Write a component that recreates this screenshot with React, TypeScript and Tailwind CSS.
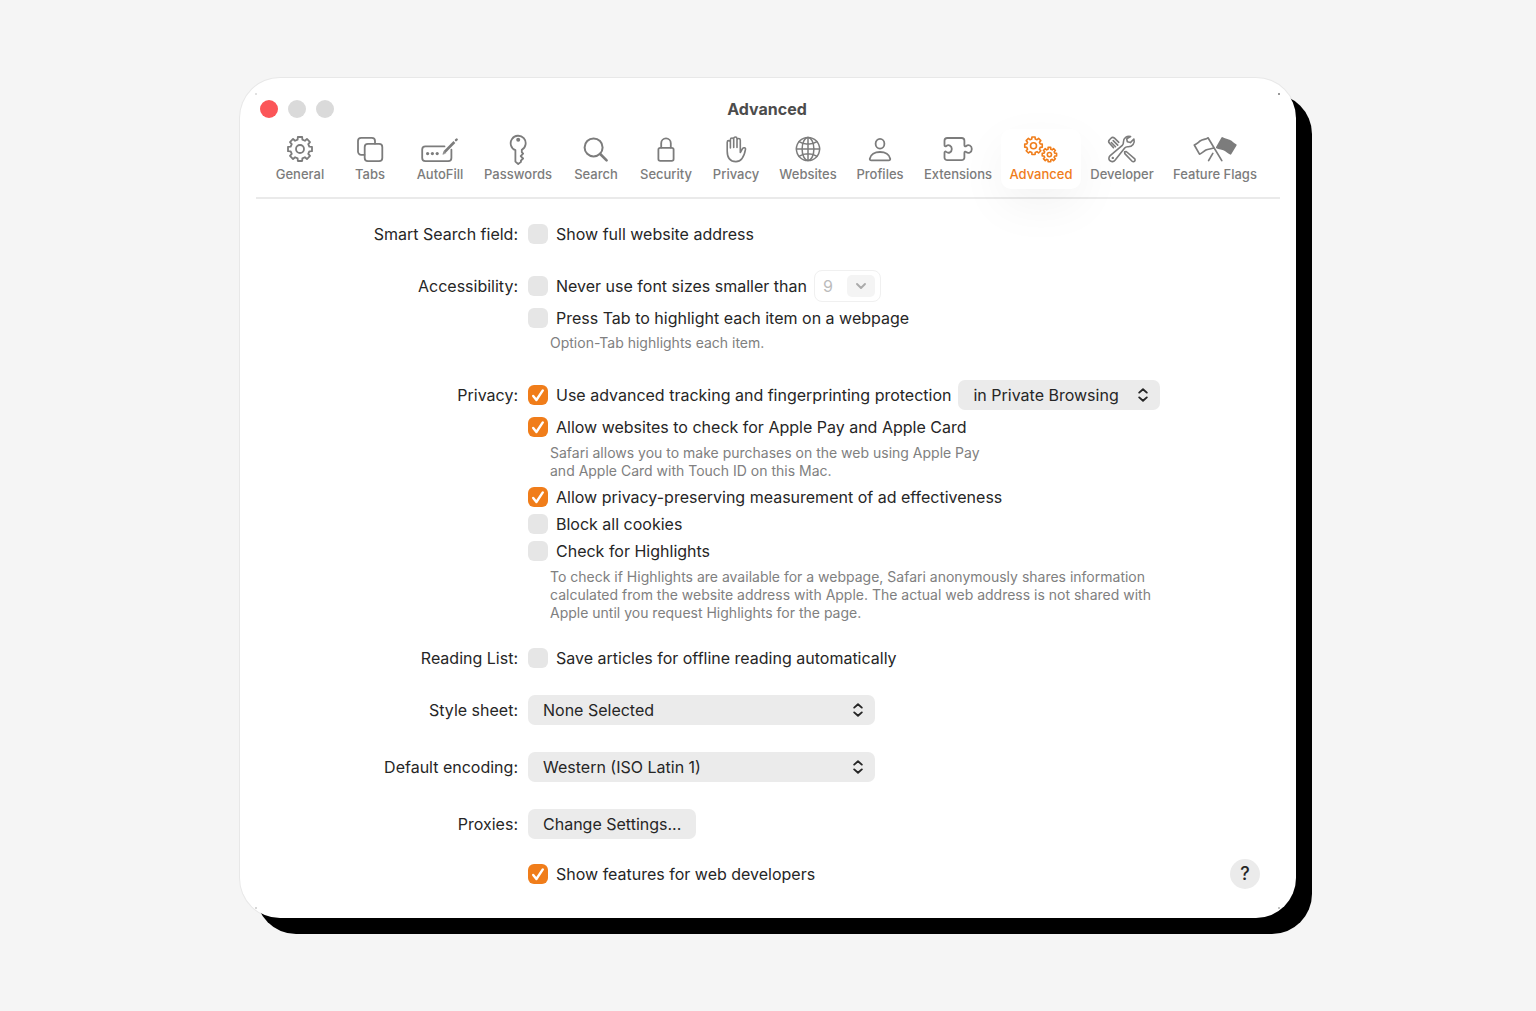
import type { ReactNode } from "react";

function gearPath(cx: number, cy: number, outer: number, inner: number) {
  const teeth = 8;
  const at = (angle: number, r: number) =>
    `${(cx + r * Math.cos(angle)).toFixed(2)} ${(cy + r * Math.sin(angle)).toFixed(2)}`;
  const points: string[] = [];
  for (let i = 0; i < teeth; i++) {
    const a = (i * 2 * Math.PI) / teeth - Math.PI / 2;
    points.push(at(a - 0.25, inner), at(a - 0.18, outer), at(a + 0.18, outer), at(a + 0.25, inner));
  }
  return `M${points.join("L")}Z`;
}

function Icon({ width = 32, stroke = 1.8, children }: { width?: number; stroke?: number; children: ReactNode }) {
  return (
    <svg
      width={width}
      height={32}
      viewBox={`0 0 ${width} 32`}
      fill="none"
      stroke="currentColor"
      strokeWidth={stroke}
      strokeLinecap="round"
      strokeLinejoin="round"
      aria-hidden="true"
    >
      {children}
    </svg>
  );
}

const icons: Record<string, ReactNode> = {
  General: (
    <Icon>
      <path d={gearPath(16, 16, 12.2, 9.6)} />
      <circle cx="16" cy="16" r="4" />
    </Icon>
  ),
  Tabs: (
    <Icon>
      <path d="M10.5 21.8H7.2a3.2 3.2 0 0 1-3.2-3.2V8a3.2 3.2 0 0 1 3.2-3.2h10.6A3.2 3.2 0 0 1 21 8v2.6" />
      <rect x="10.7" y="10.8" width="17.6" height="17.4" rx="3.2" />
    </Icon>
  ),
  AutoFill: (
    <Icon width={40}>
      <path d="M24.5 13.4H5.4a3.2 3.2 0 0 0-3.2 3.2V25a3.2 3.2 0 0 0 3.2 3.2h22.8a3.2 3.2 0 0 0 3.2-3.2v-8.3" />
      <path d="M24.6 19 34.4 9" strokeWidth="2.6" strokeLinecap="butt" />
      <path d="m23 21 .9-2.6 1.5 1.5Z" fill="currentColor" strokeWidth=".6" />
      <path d="m36 7.2.7-.7" strokeWidth="2.4" />
      <g fill="currentColor" stroke="none">
        <circle cx="7.6" cy="20.6" r="1.6" />
        <circle cx="12.4" cy="20.6" r="1.6" />
        <circle cx="17.2" cy="20.6" r="1.6" />
      </g>
    </Icon>
  ),
  Passwords: (
    <Icon>
      <path d="M13.4 17.2a7.5 7.5 0 1 1 6.4-.4v2.4l1.3 1.5-2.4 2.4 2.4 2.4-2.2 2.2.1 1.2L16.2 31l-2.8-2.4Z" />
      <circle cx="16.2" cy="6.8" r="2" fill="currentColor" stroke="none" />
    </Icon>
  ),
  Search: (
    <Icon stroke={2}>
      <circle cx="13.6" cy="14.4" r="9" />
      <path d="m20.2 21 6.4 6.4" strokeWidth="2.6" />
    </Icon>
  ),
  Security: (
    <Icon>
      <rect x="8.4" y="14.8" width="15.2" height="13" rx="1.8" />
      <path d="M11.2 14.6V10.2a4.8 4.8 0 0 1 9.6 0v4.4" />
    </Icon>
  ),
  Privacy: (
    <Icon stroke={1.6}>
      <path d="M7.2 18V9.2a1.6 1.6 0 0 1 3.2 0V15 6.7a1.6 1.6 0 0 1 3.3 0v7.8-8.8a1.6 1.6 0 0 1 3.3 0v8.8-7.3a1.6 1.6 0 0 1 3.3 0v12.3l2.2-3.8c.9-1.5 3.3-1.3 3 .6-.9 4.9-2.6 12.3-9.6 12.3-6.2 0-8.7-4-8.7-10.6Z" />
    </Icon>
  ),
  Websites: (
    <Icon stroke={1.5}>
      <circle cx="16" cy="16" r="11.6" />
      <ellipse cx="16" cy="16" rx="5.9" ry="11.6" />
      <path d="M16 4.4v23.2M4.4 16h23.2M7 8.6c5 3.4 13 3.4 18 0M7 23.4c5-3.4 13-3.4 18 0" />
    </Icon>
  ),
  Profiles: (
    <Icon>
      <ellipse cx="16" cy="10.7" rx="4.4" ry="4.9" />
      <path d="M7.3 27.4c-1.1 0-1.7-.7-1.5-1.7.8-4 4.8-6.7 10.2-6.7s9.4 2.7 10.2 6.7c.2 1-.4 1.7-1.5 1.7Z" />
    </Icon>
  ),
  Extensions: (
    <Icon>
      <path d="M2.5 12.2V7.8a2.8 2.8 0 0 1 2.8-2.8h14.3a2.8 2.8 0 0 1 2.8 2.8v4.5c0 1 1.1 1.4 1.8.7 2.3-2 5.6-.4 5.6 3s-3.3 5-5.6 3c-.7-.7-1.8-.3-1.8.7v4.7a2.8 2.8 0 0 1-2.8 2.8H5.3a2.8 2.8 0 0 1-2.8-2.8v-4.9c0-1 1-1.3 1.8-.6 2.3 1.9 5.5.3 5.5-2.9s-3.2-4.9-5.5-3c-.8.7-1.8.3-1.8-.8Z" />
    </Icon>
  ),
  Advanced: (
    <Icon width={36} stroke={1.6}>
      <path d={gearPath(10.5, 12.7, 8.9, 6.9)} />
      <circle cx="10.5" cy="12.7" r="3" />
      <path d={gearPath(26.4, 21.6, 7.3, 5.5)} />
      <circle cx="26.4" cy="21.6" r="2.1" />
    </Icon>
  ),
  Developer: (
    <Icon stroke={1.6}>
      <path d="m7.5 14.6-4-4.4c-1-1.1-1-2.5 0-3.5l1.5-1.5c1-1 2.4-1 3.5 0l4.3 4.1M7.2 7.6l4.5 4.5M5.3 9.5l4.2 4.2" />
      <path d="m18.6 18.8 1.6-.3 8.3 7.2c1.7 1.5-.7 4.2-2.4 2.5l-7.3-7.6Z" />
      <path d="M24.6 3.6c-3.5-1-7.4 1.4-7.2 5.6.1 1.5-.2 2.3-1.1 3.1L4.2 22.6c-1.7 1.5-1.7 3.8-.3 5.1 1.5 1.4 3.7 1.2 5.1-.5l9.7-12.1c.8-1 1.7-1.4 3.2-1.3 4.5.2 7.3-3.8 6-7.8L24.4 9.6l-3.1-.9-.6-2.8Z" />
      <circle cx="6.8" cy="24.9" r="1.2" fill="currentColor" stroke="none" />
    </Icon>
  ),
  "Feature Flags": (
    <Icon width={44} stroke={1.7}>
      <path d="M15 4.8 28.8 27.6M15 4.8c-2.2 1.8-5 1.4-7.5 3-1.9 1.2-3.6 3.2-6.2 4.2l5.2 9.2c2.4-1 4.3-3 6.4-4.1 2.5-1.3 5-.9 7.5-2.1" />
      <path d="M15.6 27.6 19.8 20.4" />
      <path d="M29.2 5c2.5 1.7 5.2 1.4 7.6 2.8 2.2 1.2 3.7 3 6 4.2l-5.3 8.8c-2.2-1-3.9-3-6.2-4.1-2.5-1.2-5-.9-7.5-2.3Z" fill="currentColor" />
    </Icon>
  ),
};

const tabs = [
  { name: "General", width: "min-w-[54px]" },
  { name: "Tabs", width: "min-w-[54px]" },
  { name: "AutoFill", width: "min-w-[54px]" },
  { name: "Passwords", width: "min-w-[70px]" },
  { name: "Search", width: "min-w-[54px]" },
  { name: "Security", width: "min-w-[54px]" },
  { name: "Privacy", width: "min-w-[54px]" },
  { name: "Websites", width: "min-w-[58px]" },
  { name: "Profiles", width: "min-w-[54px]" },
  { name: "Extensions", width: "min-w-[70px]" },
  { name: "Advanced", width: "min-w-[80px]" },
  { name: "Developer", width: "min-w-[66px]" },
  { name: "Feature Flags", width: "min-w-[88px]" },
];

function Check({ label, checked = false }: { label: string; checked?: boolean }) {
  return (
    <label className="flex items-center gap-2 whitespace-nowrap leading-5">
      <span className="relative size-5 shrink-0">
        <input
          type="checkbox"
          defaultChecked={checked}
          className="peer block size-5 appearance-none rounded-md bg-[#e6e6e6] checked:bg-[#f07d1a]"
        />
        <svg
          viewBox="0 0 20 20"
          className="pointer-events-none absolute inset-0 hidden size-5 peer-checked:block"
          fill="none"
          stroke="white"
          strokeWidth="2.4"
          strokeLinecap="round"
          strokeLinejoin="round"
          aria-hidden="true"
        >
          <path d="m5.2 11 3.2 4L14.8 5.4" />
        </svg>
      </span>
      {label}
    </label>
  );
}

function Popup({ id, label, value, wide }: { id: string; label?: string; value: string; wide?: boolean }) {
  return (
    <div className={wide ? "relative w-[347px]" : "relative w-[202px]"}>
      <select
        id={id}
        aria-label={label}
        className="block h-[30px] w-full appearance-none rounded-[7px] bg-[#ebebeb] pr-8 pl-[15px]"
      >
        <option>{value}</option>
      </select>
      <svg
        viewBox="0 0 12 16"
        className="pointer-events-none absolute top-[7px] right-[11px] h-4 w-3"
        fill="none"
        stroke="currentColor"
        strokeWidth="1.9"
        strokeLinecap="round"
        strokeLinejoin="round"
        aria-hidden="true"
      >
        <path d="M2.2 5.6 6 2.2l3.8 3.4M2.2 10.4 6 13.8l3.8-3.4" />
      </svg>
    </div>
  );
}

function Row({ label, htmlFor, first = "h-5", gap = "gap-[7px]", children }: { label?: string; htmlFor?: string; first?: string; gap?: string; children: ReactNode }) {
  const Tag = htmlFor ? "label" : "div";
  return (
    <div className="grid grid-cols-[262px_1fr] gap-x-[10px]">
      <Tag htmlFor={htmlFor} className={`${first} flex items-center justify-end whitespace-nowrap`}>
        {label}
      </Tag>
      <div className={`flex flex-col items-start ${gap}`}>{children}</div>
    </div>
  );
}

function Note({ children }: { children: ReactNode }) {
  return <p className="pl-[22px] text-sm leading-[18px] text-[#808080]">{children}</p>;
}

const dots = [
  "top-[15px] left-[15px] opacity-30",
  "top-[15px] right-4",
  "bottom-[9px] left-[15px] opacity-40",
  "right-4 bottom-[9px] opacity-60",
];

export default function App() {
  return (
    <div className="min-h-screen bg-[#f5f5f5] px-4 pt-[78px] pb-[77px] font-[Inter,sans-serif] text-base text-[#262626]">
      <main className="relative mx-auto max-w-[1056px] rounded-[40px] bg-white px-4 pb-[29px] shadow-[16px_16px_0_0_#000,0_0_0_1px_#e8e8e8]">
        {dots.map((place) => (
          <span key={place} className={`absolute size-0.5 rounded-full bg-[#777777] ${place}`} />
        ))}
        <header className="border-b-2 border-[#eaeaea]">
          <div className="grid grid-cols-[1fr_auto_1fr] items-center pt-[21px] pr-0.5">
            <div className="flex gap-[10px] pl-1">
              <button aria-label="Close" className="size-[18px] rounded-full bg-[#fb5558]" />
              <button aria-label="Minimize" className="size-[18px] rounded-full bg-[#dadada]" />
              <button aria-label="Zoom" className="size-[18px] rounded-full bg-[#dadada]" />
            </div>
            <h1 className="text-base leading-5 font-bold text-[#4c4c4c]">Advanced</h1>
          </div>
          <nav className="flex justify-center gap-4 pt-[10px] pr-1 pb-2">
            {tabs.map(({ name, width }) => (
              <button
                key={name}
                className={
                  name === "Advanced"
                    ? `${width} -mx-2 flex flex-col items-center rounded-[10px] bg-white pt-1 pb-[7px] text-[#f07d1a] shadow-[0_16px_48px_rgba(0,0,0,0.05)]`
                    : `${width} flex flex-col items-center pt-1 pb-[7px] text-[#7c7c7c]`
                }
              >
                {icons[name]}
                <span className="mt-px text-[13px] leading-4 font-medium whitespace-nowrap">{name}</span>
              </button>
            ))}
          </nav>
        </header>

        <div className="pt-[25px]">
          <Row label="Smart Search field:">
            <Check label="Show full website address" />
          </Row>
          <div className="mt-[26px]">
            <Row label="Accessibility:" first="h-8" gap="gap-[6px]">
              <div className="flex items-center gap-[7px]">
                <Check label="Never use font sizes smaller than" />
                <div className="flex h-8 w-[67px] items-center rounded-lg border border-[#f0f0f0] pr-[5px] pl-2">
                  <input disabled aria-label="Minimum font size" defaultValue="9" className="w-full min-w-0 text-[#bcbcbc]" />
                  <button disabled aria-label="Choose size" className="flex h-[22px] w-7 shrink-0 items-center justify-center rounded-[5px] bg-[#f4f4f4] text-[#aaaaaa]">
                    <svg width="12" height="8" viewBox="0 0 12 8" fill="none" stroke="currentColor" strokeWidth="1.9" strokeLinecap="round" strokeLinejoin="round" aria-hidden="true">
                      <path d="m2 2 4 4 4-4" />
                    </svg>
                  </button>
                </div>
              </div>
              <Check label="Press Tab to highlight each item on a webpage" />
              <Note>Option-Tab highlights each item.</Note>
            </Row>
          </div>
          <div className="mt-[28px]">
            <Row label="Privacy:" first="h-[30px]">
              <div className="flex items-center gap-[7px]">
                <Check checked label="Use advanced tracking and fingerprinting protection" />
                <Popup id="tracking" label="Tracking protection scope" value="in Private Browsing" />
              </div>
              <Check checked label="Allow websites to check for Apple Pay and Apple Card" />
              <Note>
                Safari allows you to make purchases on the web using Apple Pay
                <br />
                and Apple Card with Touch ID on this Mac.
              </Note>
              <Check checked label="Allow privacy-preserving measurement of ad effectiveness" />
              <Check label="Block all cookies" />
              <Check label="Check for Highlights" />
              <Note>
                To check if Highlights are available for a webpage, Safari anonymously shares information
                <br />
                calculated from the website address with Apple. The actual web address is not shared with
                <br />
                Apple until you request Highlights for the page.
              </Note>
            </Row>
          </div>
          <div className="mt-[26px]">
            <Row label="Reading List:">
              <Check label="Save articles for offline reading automatically" />
            </Row>
          </div>
          <div className="mt-[27px] flex flex-col gap-[27px]">
            <Row label="Style sheet:" htmlFor="style-sheet" first="h-[30px]">
              <Popup wide id="style-sheet" value="None Selected" />
            </Row>
            <Row label="Default encoding:" htmlFor="encoding" first="h-[30px]">
              <Popup wide id="encoding" value="Western (ISO Latin 1)" />
            </Row>
            <Row label="Proxies:" first="h-[30px]">
              <button className="h-[30px] rounded-[7px] bg-[#ebebeb] px-[15px] whitespace-nowrap">Change Settings...</button>
            </Row>
          </div>
          <div className="mt-[20px] flex items-center justify-between pr-5">
            <Row>
              <Check checked label="Show features for web developers" />
            </Row>
            <button aria-label="Help" className="size-[30px] rounded-full bg-[#ebebeb] text-lg leading-[30px] font-medium">?</button>
          </div>
        </div>
      </main>
    </div>
  );
}
